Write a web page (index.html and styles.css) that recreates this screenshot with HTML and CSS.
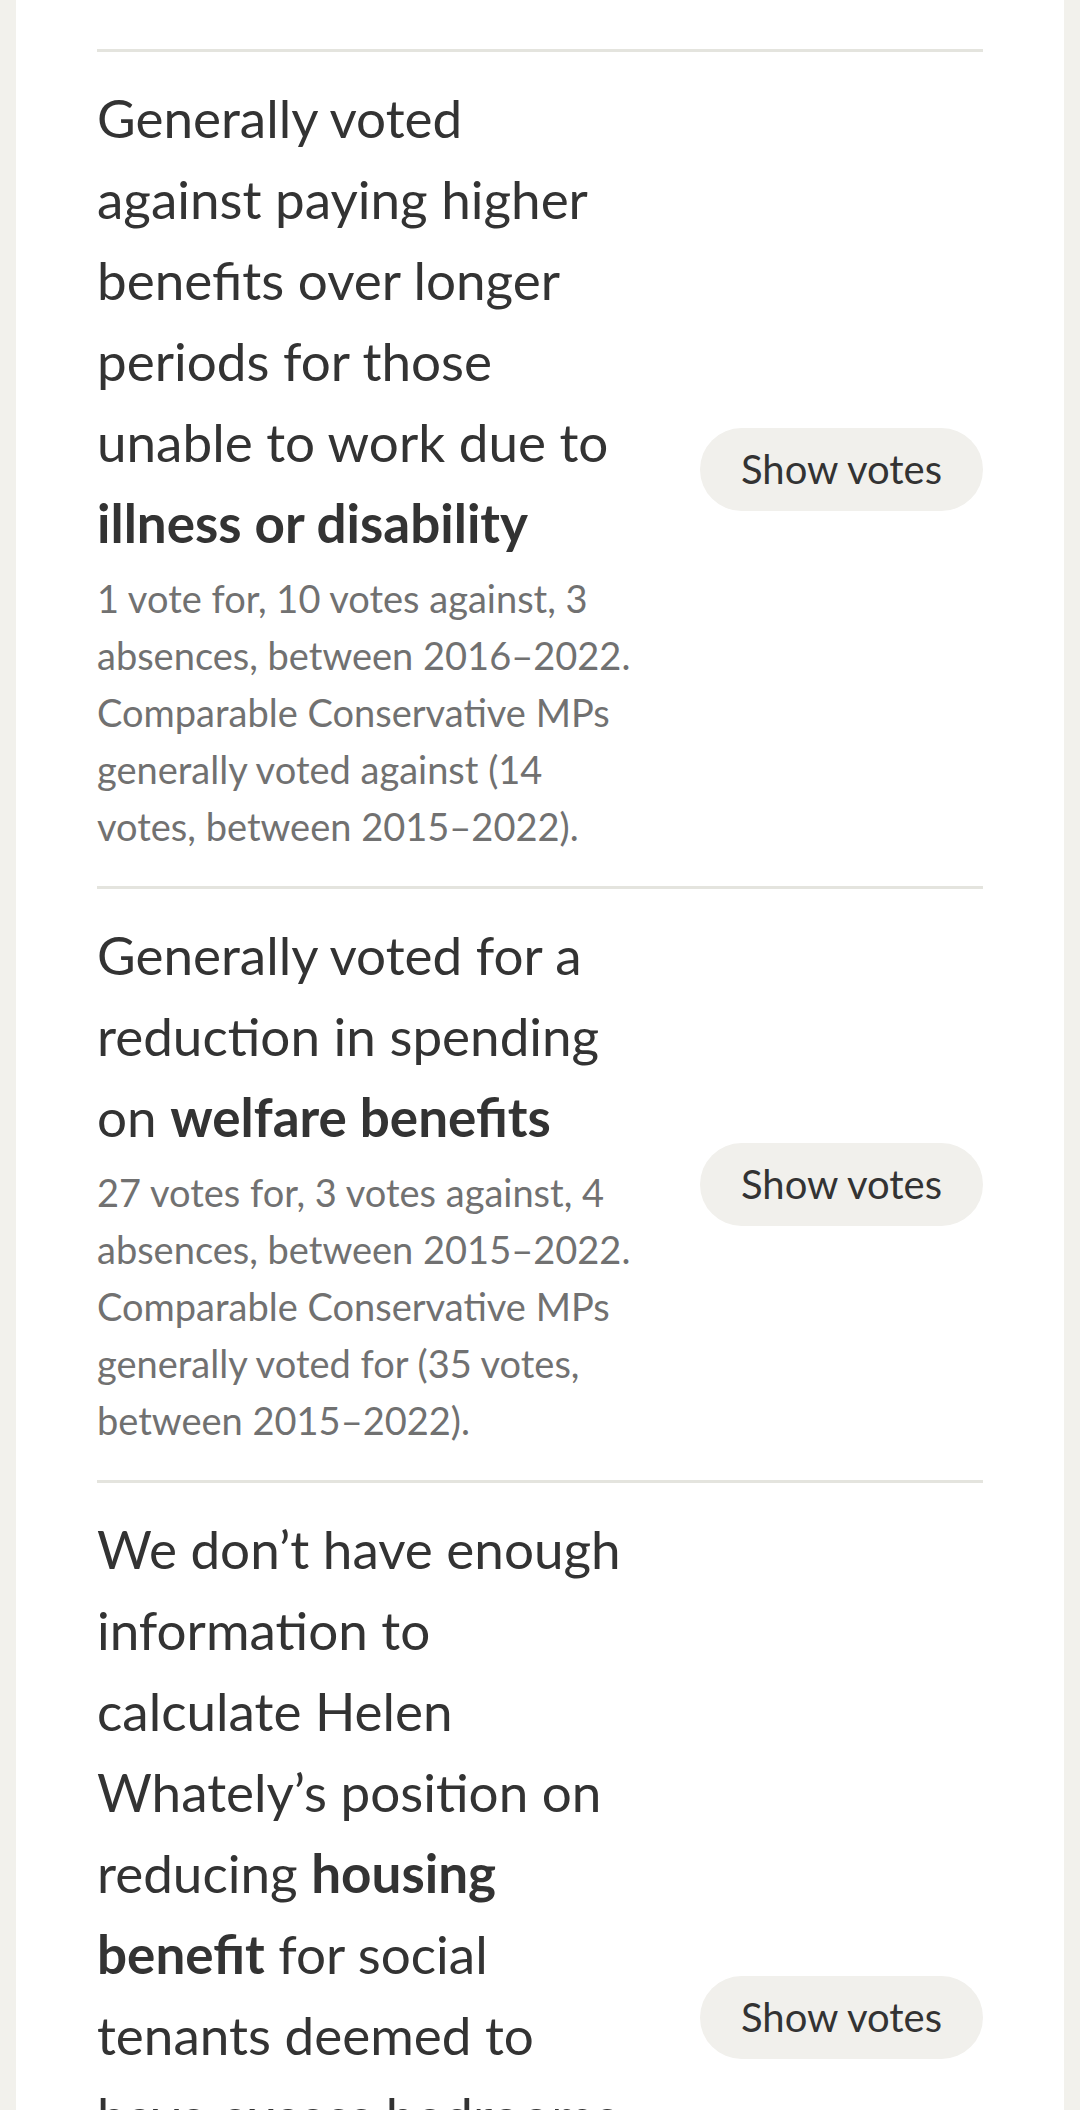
FILE: index.html
```
<!DOCTYPE html>
<html lang="en">
<head>
<meta charset="utf-8">
<title>Helen Whately – Welfare votes</title>
<link rel="stylesheet" href="styles.css">
</head>
<body>
<div class="card">
  <ul class="policies">
    <li class="policy">
      <div class="policy-text">
        <p class="policy-statement">Generally voted against paying higher benefits over longer periods for those unable to work due to <b>illness or disability</b></p>
        <p class="policy-detail">1 vote for, 10 votes against, 3 absences, between 2016–2022. Comparable Conservative MPs generally voted against (14 votes, between 2015–2022).</p>
      </div>
      <a class="show-votes" href="#">Show votes</a>
    </li>
    <li class="policy">
      <div class="policy-text">
        <p class="policy-statement">Generally voted for a reduction in spending on <b>welfare benefits</b></p>
        <p class="policy-detail">27 votes for, 3 votes against, 4 absences, between 2015–2022. Comparable Conservative MPs generally voted for (35 votes, between 2015–2022).</p>
      </div>
      <a class="show-votes" href="#">Show votes</a>
    </li>
    <li class="policy">
      <div class="policy-text">
        <p class="policy-statement">We don’t have enough information to calculate Helen Whately’s position on reducing <b>housing benefit</b> for social tenants deemed to have excess bedrooms (which Labour describe as the “bedroom tax”).</p>
        <p class="policy-detail">0 votes for, 0 votes against, 3 absences, between 2012–2014.</p>
      </div>
      <a class="show-votes" href="#">Show votes</a>
    </li>
  </ul>
</div>
</body>
</html>
```
FILE: styles.css
```
html, body {
  margin: 0;
  padding: 0;
}
body {
  background: #f2f1ec;
  font-family: Lato, "Open Sans", sans-serif;
  color: #333333;
}
.card {
  background: #ffffff;
  margin: 0 16px;
  padding: 49px 81px 0;
}
.policies {
  list-style: none;
  margin: 0;
  padding: 0;
}
.policy {
  display: flex;
  align-items: center;
  justify-content: space-between;
  border-top: 3px solid #e4e4de;
  padding: 28px 0;
}
.policy-text {
  width: 534px;
  margin: -3px 0 3px;
}
.policy-statement {
  margin: 0;
  font-size: 53px;
  line-height: 81px;
  color: #333333;
}
.policy-statement b {
  font-weight: 700;
}
.policy-detail {
  margin: 7px 0 0;
  font-size: 38px;
  line-height: 57px;
  color: #717171;
}
.show-votes {
  flex: none;
  box-sizing: border-box;
  width: 283px;
  height: 83px;
  border-radius: 42px;
  background: #f1f0ec;
  color: #333333;
  font-size: 40px;
  line-height: 83px;
  text-align: center;
  text-decoration: none;
}
```
